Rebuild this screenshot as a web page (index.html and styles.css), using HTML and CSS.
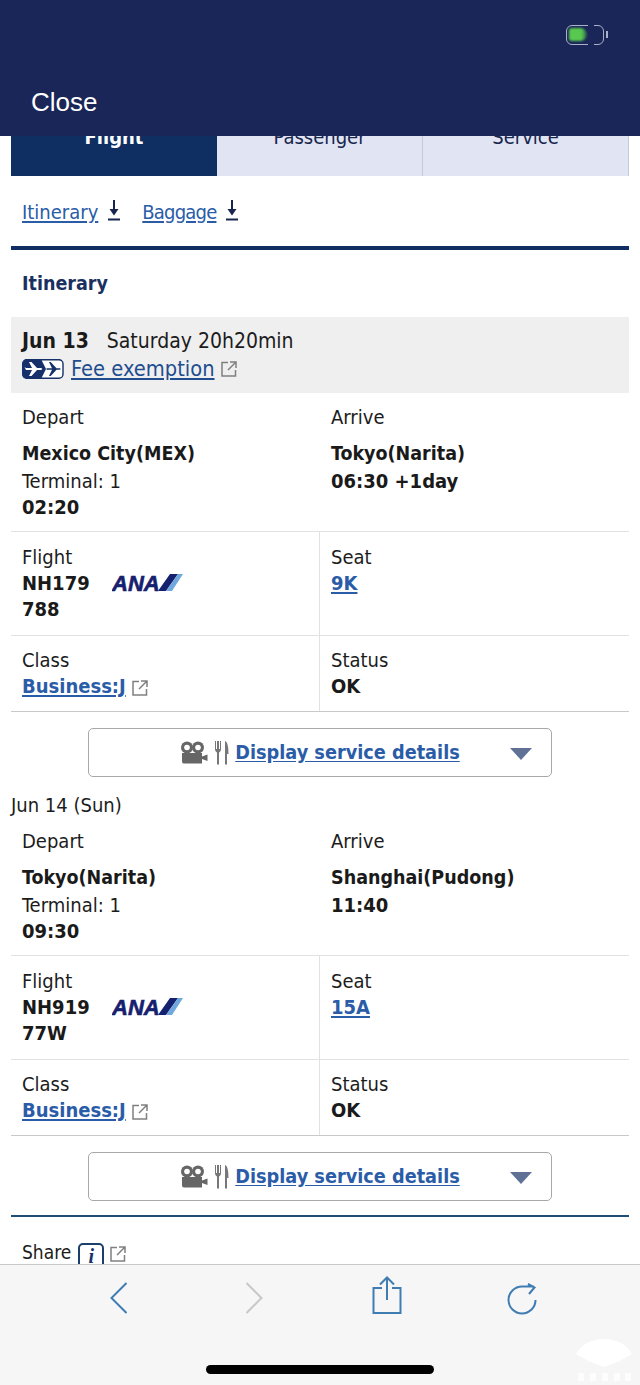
FILE: index.html
```html
<!DOCTYPE html>
<html lang="en">
<head>
<meta charset="utf-8">
<title>Itinerary</title>
<link rel="stylesheet" href="styles.css">
</head>
<body>
<svg class="defs" width="0" height="0" aria-hidden="true">
  <defs>
    <symbol id="ext" viewBox="0 0 18 18">
      <path d="M8 2.500H2V16H15.500V10M10 2H16V8M16 2L8 10" fill="none" stroke="currentColor" stroke-width="1.500"/>
    </symbol>
    <symbol id="dl" viewBox="0 0 14 22">
      <path d="M6 1H8V10H11.500L7 16.500L2.500 10H6Z M1 19.500H13V21.500H1Z" fill="currentColor"/>
    </symbol>
    <symbol id="ana" viewBox="0 0 72 20">
      <text x="0" y="18" class="ana-text">ANA</text>
      <path d="M46 18L58 1H66L54 18Z" fill="#15206f"/>
      <path d="M54 18L66 1H71L60 18Z" fill="#6fa8dc"/>
    </symbol>
    <symbol id="cam" viewBox="0 0 28 23">
      <circle cx="7" cy="6.500" r="6" fill="#666"/><circle cx="18" cy="6.500" r="6" fill="#666"/>
      <circle cx="7" cy="6.500" r="2.800" fill="#fff"/><circle cx="18" cy="6.500" r="2.800" fill="#fff"/>
      <path d="M2 12H22V15.500L27.500 13.500V20L22 18V22.500H4A2 2 0 0 1 2 20.500Z" fill="#666"/>
    </symbol>
    <symbol id="fork" viewBox="0 0 16 25">
      <path d="M1 1V9C1 11 2 12 3 12.500V24.500H5V12.500C6 12 7 11 7 9V1H6V9H5V1H3V9H2V1Z" fill="#777"/>
      <path d="M11 24.500V1C13.500 2 14.500 6 14.500 14H13V24.500Z" fill="#777"/>
    </symbol>
  </defs>
</svg>

<div class="screen">
  <header class="topbar">
    <div class="battery"><span class="battery-fill"></span><span class="battery-gap"></span><span class="battery-tip"></span></div>
    <div class="close">Close</div>
  </header>

  <main class="content">
    <nav class="tabs">
      <div class="tab tab-active">Flight</div>
      <div class="tab">Passenger</div>
      <div class="tab">Service</div>
    </nav>

    <div class="anchors">
      <a class="link" href="#">Itinerary</a>
      <svg class="dl"><use href="#dl"/></svg>
      <a class="link anchor-second" href="#">Baggage</a>
      <svg class="dl"><use href="#dl"/></svg>
    </div>

    <h2 class="section-title">Itinerary</h2>

    <div class="summary">
      <div><strong>Jun 13</strong><span class="summary-day">Saturday 20h20min</span></div>
      <div class="fee">
        <span class="fee-badge">
          <svg viewBox="0 0 42 20" width="42" height="20">
            <path d="M5 .7H37A4 4 0 0 1 41 4.700V15.300A4 4 0 0 1 37 19.300H5A4 4 0 0 1 1 15.300V4.700A4 4 0 0 1 5 .7Z" fill="#fff" stroke="#15306a" stroke-width="1.400"/>
            <path d="M5 0H19L24 10L19 20H5A5 5 0 0 1 0 15V5A5 5 0 0 1 5 0Z" fill="#15306a"/>
            <path d="M4 9H10L7 3H9.500L15 9H19Q21.500 10 19 11H15L9.500 17H7L10 11H4L2.500 8Z" fill="#fff"/>
            <path d="M24.500 9.300H30L27 3H28.700L34.500 9.300H38Q39.500 10 38 10.700H34.500L28.700 17H27L30 10.700H24.500Z" fill="#15306a"/>
          </svg>
        </span>
        <a class="link link-dark" href="#">Fee exemption</a>
        <svg class="ext"><use href="#ext"/></svg>
      </div>
    </div>

    <section class="leg">
      <div class="route">
        <div class="cell">
          <div class="label">Depart</div>
          <div class="place"><b>Mexico City(MEX)</b></div>
          <div>Terminal: 1</div>
          <div><b>02:20</b></div>
        </div>
        <div class="cell">
          <div class="label">Arrive</div>
          <div class="place"><b>Tokyo(Narita)</b></div>
          <div><b>06:30 +1day</b></div>
        </div>
      </div>
      <div class="row row-flight">
        <div class="cell cell-left">
          <div>Flight</div>
          <div class="flight-no"><b>NH179</b><svg class="ana"><use href="#ana"/></svg></div>
          <div><b>788</b></div>
        </div>
        <div class="cell">
          <div>Seat</div>
          <div><a class="link strong" href="#">9K</a></div>
        </div>
      </div>
      <div class="row row-class">
        <div class="cell cell-left">
          <div>Class</div>
          <div><a class="link strong" href="#">Business:J</a><svg class="ext ext-class"><use href="#ext"/></svg></div>
        </div>
        <div class="cell">
          <div>Status</div>
          <div><b>OK</b></div>
        </div>
      </div>
      <div class="details">
        <svg class="cam"><use href="#cam"/></svg>
        <svg class="fork"><use href="#fork"/></svg>
        <a class="link strong" href="#">Display service details</a>
        <span class="caret"></span>
      </div>
    </section>

    <div class="leg-date">Jun 14 (Sun)</div>

    <section class="leg">
      <div class="route">
        <div class="cell">
          <div class="label">Depart</div>
          <div class="place"><b>Tokyo(Narita)</b></div>
          <div>Terminal: 1</div>
          <div><b>09:30</b></div>
        </div>
        <div class="cell">
          <div class="label">Arrive</div>
          <div class="place"><b>Shanghai(Pudong)</b></div>
          <div><b>11:40</b></div>
        </div>
      </div>
      <div class="row row-flight">
        <div class="cell cell-left">
          <div>Flight</div>
          <div class="flight-no"><b>NH919</b><svg class="ana"><use href="#ana"/></svg></div>
          <div><b>77W</b></div>
        </div>
        <div class="cell">
          <div>Seat</div>
          <div><a class="link strong" href="#">15A</a></div>
        </div>
      </div>
      <div class="row row-class">
        <div class="cell cell-left">
          <div>Class</div>
          <div><a class="link strong" href="#">Business:J</a><svg class="ext ext-class"><use href="#ext"/></svg></div>
        </div>
        <div class="cell">
          <div>Status</div>
          <div><b>OK</b></div>
        </div>
      </div>
      <div class="details">
        <svg class="cam"><use href="#cam"/></svg>
        <svg class="fork"><use href="#fork"/></svg>
        <a class="link strong" href="#">Display service details</a>
        <span class="caret"></span>
      </div>
    </section>

    <div class="share">
      <span>Share</span>
      <span class="info">i</span>
      <svg class="ext ext-share"><use href="#ext"/></svg>
    </div>
  </main>

  <footer class="toolbar">
    <div class="tools">
      <svg class="tool tool-back" viewBox="0 0 18 32"><path d="M16.500 1L1.500 16L16.500 31"/></svg>
      <svg class="tool tool-forward" viewBox="0 0 18 32"><path d="M1.500 1L16.500 16L1.500 31"/></svg>
      <svg class="tool tool-share" viewBox="0 0 30 38"><path d="M10 12H1.500V37H28.500V12H20M15 24V1.500M8 8.500L15 1.500L22 8.500"/></svg>
      <svg class="tool tool-reload" viewBox="0 0 30 30"><path d="M28.500 16A13.500 13.500 0 1 1 15 2.500H27M21 0L27.500 3.500L22 10"/></svg>
    </div>
    <div class="home-bar"></div>
    <svg class="watermark" viewBox="0 0 56 46">
      <path d="M28 2C42 2 52 9 56 17C48 22 40 26 28 30C16 26 8 22 0 17C4 9 14 2 28 2Z" fill="#fff"/>
      <path d="M2 36H8V44H2ZM14 36H20V44H14ZM26 36H32V44H26ZM38 36H44V44H38ZM49 36H55V44H49Z" fill="#fff" opacity=".8"/>
    </svg>
  </footer>
</div>
</body>
</html>
```

FILE: styles.css
```css
* { box-sizing: border-box; }
html, body { margin: 0; padding: 0; }
body {
  width: 640px;
  height: 1385px;
  overflow: hidden;
  background: #fff;
  color: #1c1c1c;
  font-family: "DejaVu Sans Condensed", "DejaVu Sans", sans-serif;
  font-size: 20px;
  line-height: 26px;
}
b, strong { font-weight: 700; color: #1a1a1a; }
.defs { position: absolute; }

.screen { display: flex; flex-direction: column; height: 1385px; }

.topbar {
  position: relative;
  z-index: 2;
  flex: 0 0 136px;
  background: #1a2658;
  color: #fff;
  padding: 86px 0 0 31px;
}
.close { font-family: "Liberation Sans", sans-serif; font-size: 26px; line-height: 32px; }
.battery {
  position: absolute;
  left: 566px;
  top: 25px;
  width: 38px;
  height: 20px;
  border: 1.500px solid #aab0c8;
  border-radius: 6px;
}
.battery-fill {
  position: absolute;
  left: 2px;
  top: 2px;
  width: 18px;
  height: 13px;
  background: linear-gradient(90deg, #58c84f 70%, rgba(88, 200, 79, .3));
  border-radius: 3px 7px 7px 3px;
  filter: blur(.8px);
}
.battery-gap {
  position: absolute;
  left: 21px;
  top: -3px;
  width: 6px;
  height: 23px;
  background: #1a2658;
}
.battery-tip {
  position: absolute;
  right: -5px;
  top: 5px;
  width: 2px;
  height: 7px;
  background: #aab0c8;
}

.content { flex: 1 1 auto; overflow: hidden; padding: 0 11px; min-height: 0; }

.tabs {
  display: grid;
  grid-template-columns: 206px 206px 206px;
  height: 58px;
  margin-top: -18px;
  border-bottom: 3px solid #0f2f63;
}
.tab {
  background: #e1e4f3;
  border-right: 1px solid #c6c9d6;
  color: #16264f;
  text-align: center;
  padding-top: 6px;
}
.tab-active {
  background: #0f2f63;
  color: #fff;
  font-weight: 700;
  height: 58px;
  border-right: 0;
}

.anchors {
  display: flex;
  align-items: center;
  height: 74px;
  padding: 1px 0 0 11px;
  border-bottom: 4px solid #0f2f63;
}
.link { color: #2a5ca8; text-decoration: underline; text-underline-offset: 2px; }
.link-dark { color: #1f4d8f; font-size: 21.700px; }
.strong { font-weight: 700; }
.dl { width: 14px; height: 22px; margin-left: 9px; color: #16264f; margin-bottom: 3px; }
.anchor-second { margin-left: 21px; letter-spacing: -.8px; }

.section-title {
  margin: 0;
  height: 67px;
  padding: 21px 0 0 11px;
  color: #1a3060;
  font-size: 19.500px;
  font-weight: 700;
  line-height: 26px;
}

.summary {
  height: 76px;
  background: #efefef;
  padding: 10px 11px 0;
  line-height: 28px;
  font-size: 21px;
}
.summary-day { margin-left: 18px; }
.fee { display: flex; align-items: center; }
.fee-badge { display: flex; margin-right: 7px; }
.ext { width: 18px; height: 18px; margin-left: 5px; color: #808080; }
.ext-class { vertical-align: -4px; margin-left: 5px; }

.route {
  display: grid;
  grid-template-columns: 309px 309px;
  height: 139px;
  border-bottom: 1px solid #e2e2e2;
  padding-top: 11px;
}
.cell { padding-left: 11px; }
.place { margin-top: 10px; font-size: 19.500px; line-height: 28px; }
.label { line-height: 26px; }
.route .cell > div:last-child { font-size: 20px; }
.row { display: grid; grid-template-columns: 309px 309px; }
.row-flight { height: 104px; border-bottom: 1px solid #e2e2e2; padding-top: 12px; }
.row-class { height: 76px; border-bottom: 1px solid #c9c9c9; padding-top: 11px; }
.cell-left { border-right: 1px solid #e2e2e2; margin-top: -12px; padding-top: 12px; }
.row-class .cell-left { margin-top: -11px; padding-top: 11px; }
.flight-no { display: flex; align-items: center; }
.ana { width: 72px; height: 20px; margin-left: 22px; }
.ana-text { font: italic 700 22px "Liberation Sans", sans-serif; fill: #15206f; stroke: #15206f; stroke-width: .6; }

.details {
  position: relative;
  display: flex;
  align-items: center;
  justify-content: center;
  width: 464px;
  height: 49px;
  margin: 16px 0 0 77px;
  border: 1px solid #a8a8a8;
  border-radius: 5px;
  font-size: 19.700px;
}
.cam { width: 28px; height: 23px; }
.fork { width: 16px; height: 25px; margin: 0 5px 0 6px; }
.caret {
  position: absolute;
  right: 19px;
  top: 19px;
  width: 0;
  height: 0;
  border-left: 11px solid transparent;
  border-right: 11px solid transparent;
  border-top: 12px solid #5f7296;
}

.leg-date { height: 40px; padding-top: 15px; }

.share {
  display: flex;
  align-items: flex-start;
  margin-top: 14px;
  border-top: 2px solid #1f4d74;
  padding: 22px 0 0 11px;
  font-size: 19px;
}
.info {
  width: 26px;
  height: 26px;
  margin: 4px 0 0 7px;
  border: 2px solid #1a3f6b;
  border-radius: 5px;
  color: #15306a;
  font: italic 700 20px/22px "Liberation Serif", serif;
  text-align: center;
}
.ext-share { margin-top: 6px; }

.toolbar {
  position: relative;
  flex: 0 0 121px;
  background: #f6f6f6;
  border-top: 1px solid #c9c9c9;
  display: flex;
  flex-direction: column;
}
.tools { position: relative; height: 100px; }
.tool { position: absolute; fill: none; stroke: #3e7cb2; stroke-width: 2; overflow: visible; }
.tool-back { left: 110px; top: 17px; width: 18px; height: 32px; }
.tool-forward { left: 245px; top: 17px; width: 18px; height: 32px; stroke: #c8c8c8; }
.tool-share { left: 372px; top: 11px; width: 30px; height: 38px; }
.tool-reload { left: 507px; top: 19px; width: 30px; height: 30px; }
.home-bar {
  width: 228px;
  height: 9px;
  margin-left: 206px;
  background: #000;
  border-radius: 5px;
}
.watermark { position: absolute; left: 576px; top: 72px; width: 56px; height: 46px; }
```
